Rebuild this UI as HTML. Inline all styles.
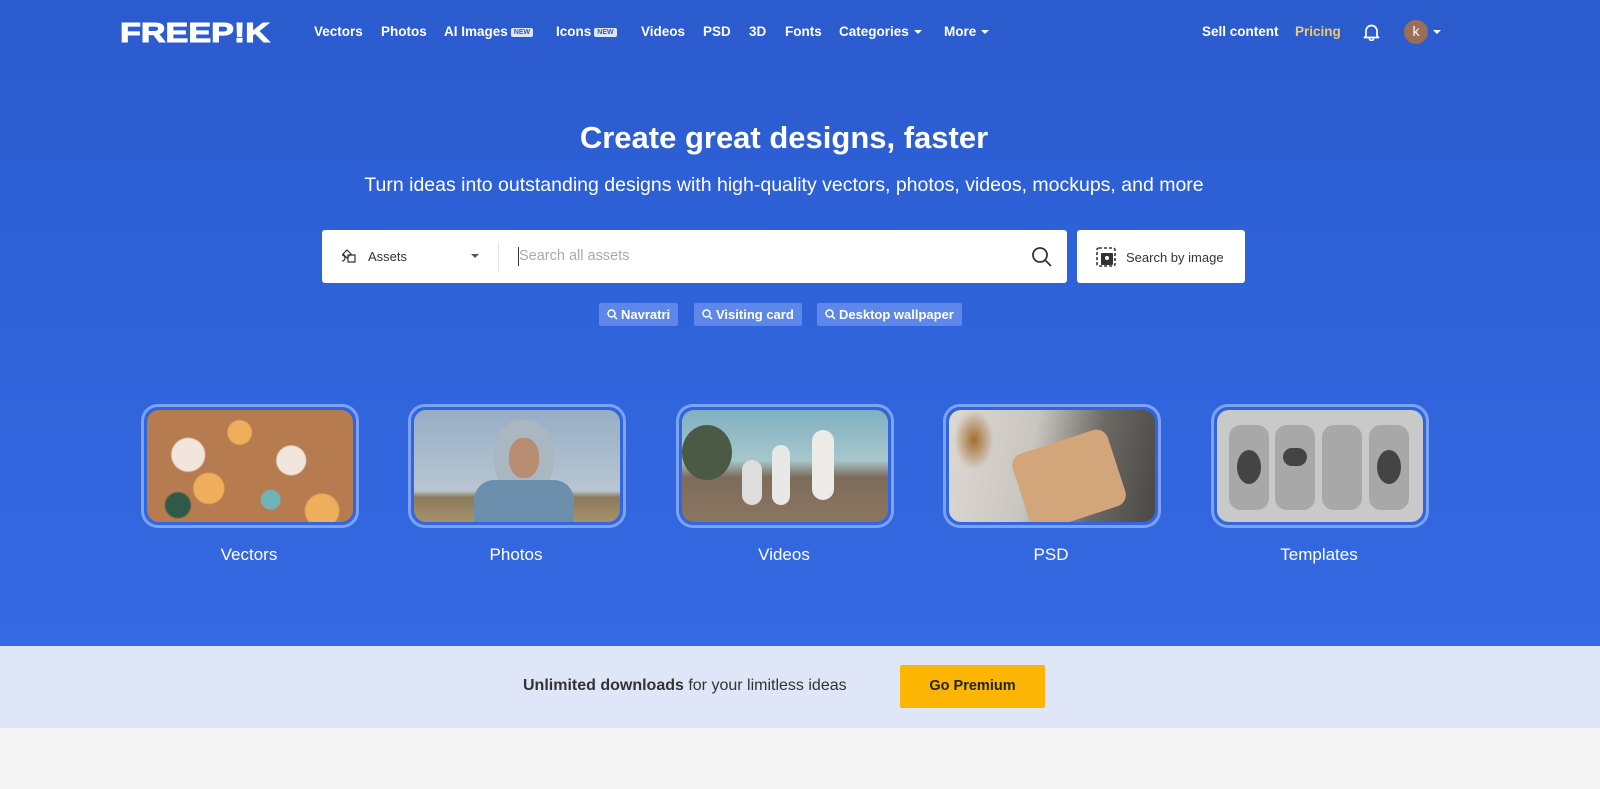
<!DOCTYPE html>
<html><head><meta charset="utf-8"><style>
*{margin:0;padding:0;box-sizing:border-box}
body{width:1600px;height:789px;overflow:hidden;font-family:"Liberation Sans",sans-serif;background:#f5f5f5}
.hero{position:absolute;left:0;top:0;width:1600px;height:646px;background:linear-gradient(180deg,#2b5bcd 0%,#2e62d8 40%,#3469e3 100%)}
.nav{position:absolute;top:0;left:0;width:1600px;height:64px}
.logo{position:absolute;left:120px;top:17px;color:#fff;font-weight:900;font-size:28px;letter-spacing:0px;transform:scaleX(1.22);transform-origin:left;-webkit-text-stroke:1px #fff}
.nav a{position:absolute;top:24px;color:#fff;font-size:13.5px;font-weight:bold;text-decoration:none;white-space:nowrap}
.new{display:inline-block;background:#dfe5f3;color:#2b5bcd;font-size:7px;padding:1px 3px;border-radius:2px;vertical-align:2px;margin-left:3px;font-weight:bold}
.car{display:inline-block;width:0;height:0;border-left:4px solid transparent;border-right:4px solid transparent;border-top:4px solid #fff;margin-left:5px;vertical-align:2px}
h1{position:absolute;top:120px;width:1568px;text-align:center;color:#fff;font-size:31px;font-weight:bold}
.sub{position:absolute;top:174px;width:1568px;text-align:center;color:#fff;font-size:19.5px}
.search{position:absolute;left:322px;top:230px;width:745px;height:53px;background:#fff;border-radius:3px}
.sbi{position:absolute;left:1077px;top:230px;width:168px;height:53px;background:#fff;border-radius:3px;font-size:13px;color:#333}
.tag{position:absolute;top:303px;height:23px;background:#5d87e8;border-radius:2px;color:#fff;font-size:13px;font-weight:bold;line-height:23px;padding:0 8px 0 8px}
.tag svg{vertical-align:-1px;margin-right:3px}
.card{position:absolute;top:404px;width:218px;height:124px;border:3px solid #7ea2f2;border-radius:17px;padding:3px}
.card div{width:100%;height:100%;border-radius:12px;overflow:hidden;position:relative}
.lbl{position:absolute;top:545px;width:218px;text-align:center;color:#fff;font-size:17px}
.banner{position:absolute;left:0;top:646px;width:1600px;height:82px;background:#dfe6f8}
</style></head><body>
<div class="hero">
<div class="nav">
<div class="logo">FREEP!K</div>
<a style="left:314px">Vectors</a><a style="left:381px">Photos</a>
<a style="left:444px">AI Images<span class="new">NEW</span></a>
<a style="left:556px">Icons<span class="new">NEW</span></a>
<a style="left:641px">Videos</a><a style="left:703px">PSD</a><a style="left:749px">3D</a><a style="left:785px">Fonts</a>
<a style="left:839px">Categories<span class="car"></span></a>
<a style="left:944px">More<span class="car"></span></a>
<a style="left:1202px">Sell content</a><a style="left:1295px;color:#f5c96e">Pricing</a>
<svg style="position:absolute;left:1363px;top:23px" width="17" height="18" viewBox="0 0 17 18"><path d="M3 13V8a5.5 5.5 0 0 1 11 0v5l1.5 1.5h-14z M6.5 15.5a2 2 0 0 0 4 0" fill="none" stroke="#fff" stroke-width="1.7" stroke-linejoin="round"/></svg>
<div style="position:absolute;left:1404px;top:20px;width:24px;height:24px;border-radius:50%;background:#9b6e55;color:#fff;font-size:14px;text-align:center;line-height:23px">k</div>
<span class="car" style="position:absolute;left:1428px;top:30px"></span>
</div>
<h1>Create great designs, faster</h1>
<div class="sub">Turn ideas into outstanding designs with high-quality vectors, photos, videos, mockups, and more</div>
<div class="search">
<svg style="position:absolute;left:20px;top:19px" width="15" height="14" viewBox="0 0 15 14"><path d="M1 5l4-4 4 4-4 4z M6 6h7v7H6z M3 9a3 3 0 1 0 0 .1" fill="none" stroke="#333" stroke-width="1.2"/></svg>
<span style="position:absolute;left:46px;top:19px;font-size:13px;color:#333">Assets</span>
<span style="position:absolute;left:149px;top:24px;border-left:4px solid transparent;border-right:4px solid transparent;border-top:4px solid #555"></span>
<div style="position:absolute;left:176px;top:12px;width:1px;height:29px;background:#e5e5e5"></div>
<div style="position:absolute;left:196px;top:17px;width:1px;height:19px;background:#333"></div>
<span style="position:absolute;left:197px;top:18px;font-size:14.5px;color:#aaa">Search all assets</span>
<svg style="position:absolute;left:709px;top:16px" width="22" height="22" viewBox="0 0 22 22"><circle cx="9" cy="9" r="7" fill="none" stroke="#333" stroke-width="1.8"/><path d="M14 14l6 6" stroke="#333" stroke-width="1.8"/></svg>
</div>
<div class="sbi">
<svg style="position:absolute;left:19px;top:17px" width="20" height="20" viewBox="0 0 20 20"><rect x="1" y="1" width="18" height="18" rx="2" fill="none" stroke="#333" stroke-width="1.6" stroke-dasharray="3 2"/><rect x="5" y="6" width="12" height="12" rx="1" fill="#333"/><circle cx="11" cy="11" r="2" fill="#fff"/></svg>
<span style="position:absolute;left:49px;top:20px">Search by image</span>
</div>
<div class="tag" style="left:599px"><svg width="11" height="11" viewBox="0 0 11 11"><circle cx="4.5" cy="4.5" r="3.5" fill="none" stroke="#fff" stroke-width="1.5"/><path d="M7 7l3 3" stroke="#fff" stroke-width="1.5"/></svg>Navratri</div>
<div class="tag" style="left:694px"><svg width="11" height="11" viewBox="0 0 11 11"><circle cx="4.5" cy="4.5" r="3.5" fill="none" stroke="#fff" stroke-width="1.5"/><path d="M7 7l3 3" stroke="#fff" stroke-width="1.5"/></svg>Visiting card</div>
<div class="tag" style="left:817px"><svg width="11" height="11" viewBox="0 0 11 11"><circle cx="4.5" cy="4.5" r="3.5" fill="none" stroke="#fff" stroke-width="1.5"/><path d="M7 7l3 3" stroke="#fff" stroke-width="1.5"/></svg>Desktop wallpaper</div>

<div class="card" style="left:141px"><div style="background:radial-gradient(circle at 20% 40%,#f2e6dc 0 9%,transparent 10%),radial-gradient(circle at 70% 45%,#f2e6dc 0 9%,transparent 10%),radial-gradient(circle at 45% 20%,#eeae5c 0 8%,transparent 9%),radial-gradient(circle at 30% 70%,#eeae5c 0 9%,transparent 10%),radial-gradient(circle at 85% 90%,#eeae5c 0 8%,transparent 9%),radial-gradient(circle at 60% 80%,#6fb4b8 0 6%,transparent 7%),radial-gradient(circle at 15% 85%,#2f5a48 0 6%,transparent 7%),#b67b4e"></div></div>
<div class="card" style="left:408px"><div style="background:linear-gradient(180deg,#97adc5 0%,#b9c6d2 72%,#8a7b5a 78%,#a7916c 100%)"><div style="position:absolute;left:80px;top:10px;width:60px;height:75px;border-radius:45%;background:#aab7c0"></div><div style="position:absolute;left:95px;top:28px;width:30px;height:40px;border-radius:45%;background:#b88c70"></div><div style="position:absolute;left:60px;top:70px;width:100px;height:50px;border-radius:20px 20px 0 0;background:#6d8fae"></div></div></div>
<div class="card" style="left:676px"><div style="background:linear-gradient(180deg,#7fb0c2 0%,#a7c7cc 45%,#7d6c5b 60%,#8b7560 100%)"><div style="position:absolute;left:0;top:15px;width:50px;height:55px;border-radius:50%;background:#4a5a44"></div><div style="position:absolute;left:90px;top:35px;width:18px;height:60px;background:#e8e8e6"></div><div style="position:absolute;left:130px;top:20px;width:22px;height:70px;background:#ecebe8"></div><div style="position:absolute;left:60px;top:50px;width:20px;height:45px;background:#ddd"></div></div></div>
<div class="card" style="left:943px"><div style="background:linear-gradient(100deg,#ddd9d2 0%,#c9c5bf 40%,#6c6964 70%,#4a4845 100%)"><div style="position:absolute;left:70px;top:30px;width:100px;height:80px;background:#d3a57a;transform:rotate(-18deg)"></div><div style="position:absolute;left:5px;top:0;width:40px;height:60px;background:radial-gradient(#a26e2b,transparent 70%)"></div></div></div>
<div class="card" style="left:1211px"><div style="background:#c9c9c9"><div style="position:absolute;left:12px;top:15px;width:40px;height:85px;background:#a8a8a8"></div><div style="position:absolute;left:58px;top:15px;width:40px;height:85px;background:#a8a8a8"></div><div style="position:absolute;left:105px;top:15px;width:40px;height:85px;background:#a8a8a8"></div><div style="position:absolute;left:152px;top:15px;width:40px;height:85px;background:#a8a8a8"></div><div style="position:absolute;left:20px;top:40px;width:24px;height:34px;border-radius:50%;background:#444"></div><div style="position:absolute;left:66px;top:38px;width:24px;height:18px;background:#444"></div><div style="position:absolute;left:160px;top:40px;width:24px;height:34px;border-radius:50%;background:#444"></div></div></div>

<div class="lbl" style="left:140px">Vectors</div>
<div class="lbl" style="left:407px">Photos</div>
<div class="lbl" style="left:675px">Videos</div>
<div class="lbl" style="left:942px">PSD</div>
<div class="lbl" style="left:1210px">Templates</div>
</div>
<div class="banner">
<span style="position:absolute;left:523px;top:31px;font-size:16px;color:#333"><b>Unlimited downloads</b> for your limitless ideas</span>
<div style="position:absolute;left:900px;top:19px;width:145px;height:43px;background:#fdb503;border-radius:2px;text-align:center;line-height:43px;font-size:14.5px;font-weight:bold;color:#222">Go Premium</div>
</div>
</body></html>
